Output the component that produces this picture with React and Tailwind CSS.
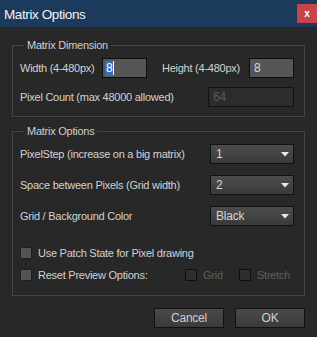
import React from 'react';

const font = { fontFamily: '"Liberation Sans", Arial, sans-serif' };

function Select({ value }) {
  return (
    <div className="relative w-[84px] h-[20px] border border-[#111] bg-gradient-to-b from-[#4b4b4b] via-[#454545] to-[#393939] flex items-center pl-[5px] text-[12px] tracking-[-0.2px] text-[#d6d6d6]">
      {value}
      <svg className="absolute right-[4px] top-[7px]" width="8" height="5" viewBox="0 0 8 5">
        <path d="M0 0 H8 L4 4.5 Z" fill="#e8e8e8" />
      </svg>
    </div>
  );
}

function Check({ label, disabled }) {
  return (
    <div className="flex items-center gap-[6px]">
      <div className={`w-[12px] h-[12px] rounded-[1px] border ${disabled ? 'bg-[#2e2e2e] border-[#0f0f0f]' : 'bg-[#545454] border-[#1e1e1e]'}`} />
      <span className={disabled ? 'text-[#5e5e5e]' : 'text-[#d2d2d2]'}>{label}</span>
    </div>
  );
}

function Group({ title, children, className }) {
  return (
    <fieldset className={`border border-[#464646] px-[7px] pr-[10px] ${className}`}>
      <legend className="ml-[4px] px-[3px] h-[16px] leading-[16px] text-[#cfcfcf]">{title}</legend>
      {children}
    </fieldset>
  );
}

export default function App() {
  return (
    <div className="w-[317px] h-[337px] bg-[#282828] flex flex-col text-[11px] tracking-[-0.25px] text-[#d2d2d2]" style={font}>
      {/* title bar */}
      <div className="h-[27px] bg-[#1c3a5c] flex items-start justify-between shrink-0">
        <span className="pl-[4px] pt-[5px] text-[13.5px] tracking-[-0.4px] text-[#f2f2f2]">Matrix Options</span>
        <div className="mt-[4px] w-[20px] h-[19px] bg-[#c8444b] flex items-center justify-center text-white text-[10px] font-bold leading-none tracking-normal">x</div>
      </div>

      <div className="px-[12px] flex flex-col">
        <Group title="Matrix Dimension" className="mt-[10px] pb-[9px]">
          <div className="flex items-center h-[20px] mt-[5px]">
            <span className="w-[82px]">Width (4-480px)</span>
            <div className="w-[45px] h-[20px] bg-[#565656] border border-[#0e0e0e] flex items-center pl-[2px] text-[12px]">
              <span className="bg-[#2f6fc4] text-white px-[1px] leading-[15px]">8</span>
              <span className="w-px h-[14px] bg-white" />
            </div>
            <span className="ml-[15px] w-[87px]">Height (4-480px)</span>
            <div className="w-[45px] h-[20px] bg-[#565656] border border-[#0e0e0e] flex items-center pl-[4px] text-[12px] text-[#d8d8d8]">8</div>
          </div>
          <div className="flex items-center h-[20px] mt-[9px]">
            <span>Pixel Count (max 48000 allowed)</span>
            <div className="ml-auto w-[86px] h-[20px] bg-[#2c2c2c] border border-[#121212] flex items-center pl-[4px] text-[12px] text-[#5a5a5a]">64</div>
          </div>
        </Group>

        <Group title="Matrix Options" className="mt-[6px] pb-[10px]">
          <div className="flex items-center justify-between mt-[5px]">
            <span>PixelStep (increase on a big matrix)</span>
            <Select value="1" />
          </div>
          <div className="flex items-center justify-between mt-[11px]">
            <span>Space between Pixels (Grid width)</span>
            <Select value="2" />
          </div>
          <div className="flex items-center justify-between mt-[11px]">
            <span>Grid / Background Color</span>
            <Select value="Black" />
          </div>
          <div className="flex items-center h-[20px] mt-[17px]">
            <Check label="Use Patch State for Pixel drawing" />
          </div>
          <div className="flex items-center h-[20px] mt-[2px]">
            <div className="w-[165px]"><Check label="Reset Preview Options:" /></div>
            <div className="w-[54px]"><Check label="Grid" disabled /></div>
            <Check label="Stretch" disabled />
          </div>
        </Group>

        <div className="flex justify-end gap-[11px] mt-[12px]">
          <button className="w-[70px] h-[20px] border border-[#111] bg-gradient-to-b from-[#4a4a4a] to-[#3a3a3a] text-[#d0d0d0] text-[12px]">Cancel</button>
          <button className="w-[70px] h-[20px] border border-[#111] bg-gradient-to-b from-[#4a4a4a] to-[#3a3a3a] text-[#d0d0d0] text-[12px]">OK</button>
        </div>
      </div>
    </div>
  );
}
